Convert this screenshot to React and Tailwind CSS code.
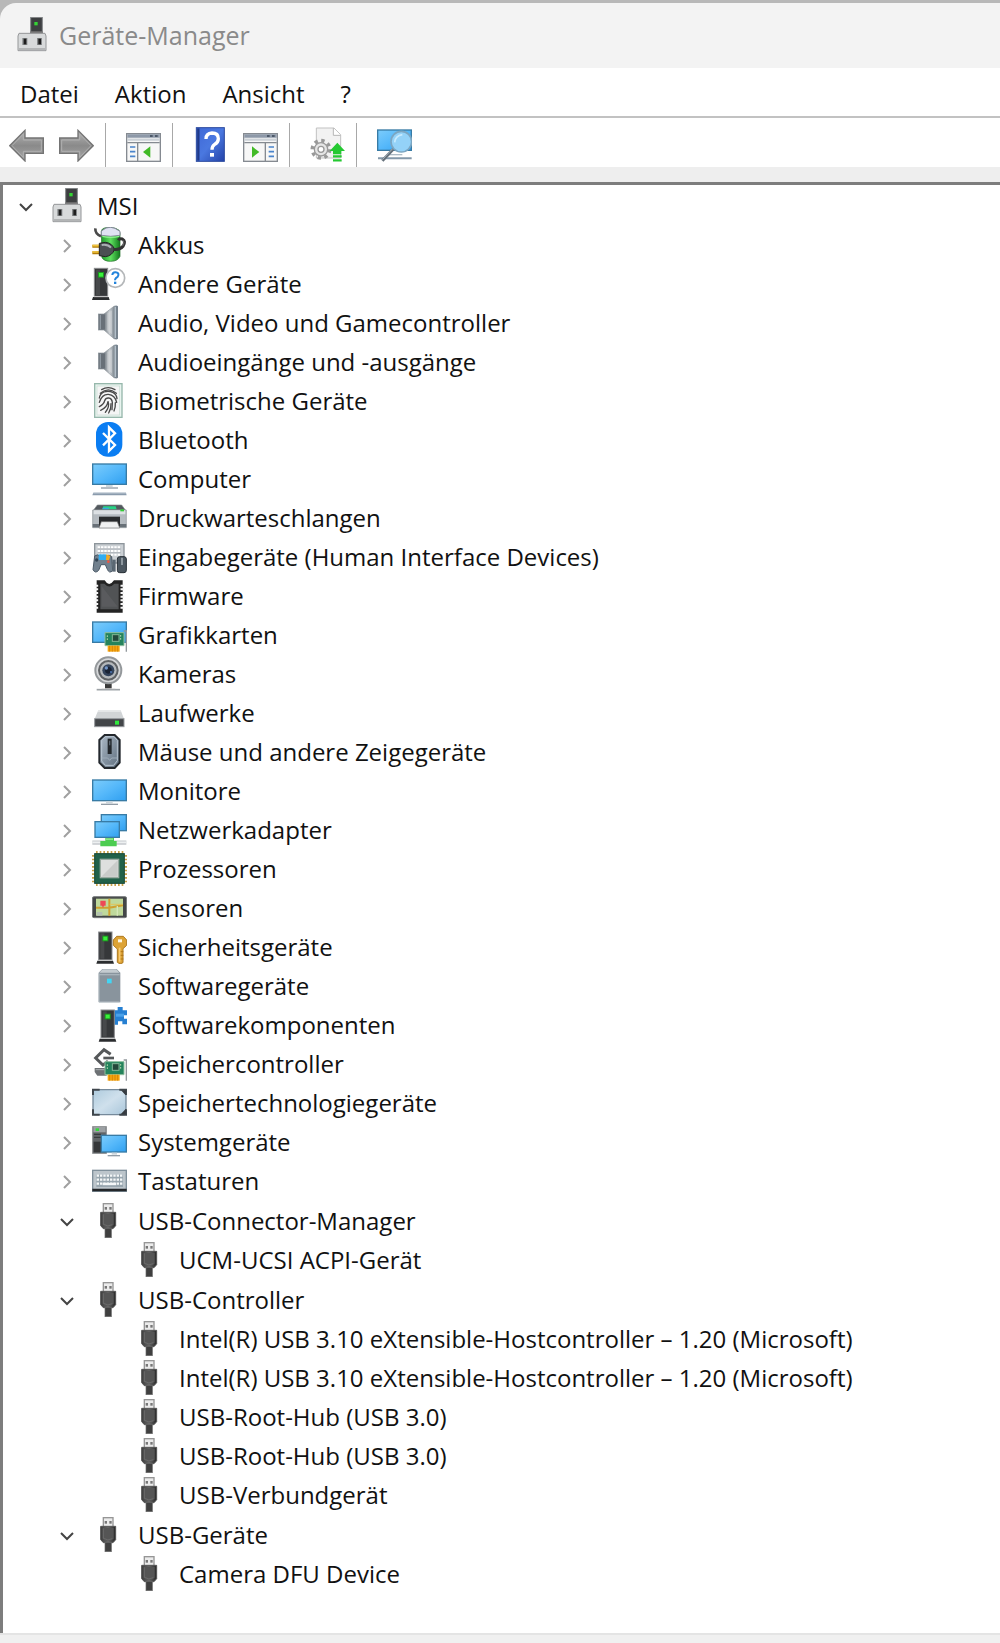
import React, { useState } from "react";

function Icon({ children, className = "" }) {
  return (
    <svg
      viewBox="0 0 105 105"
      className={"block size-[35px] shrink-0 " + className}
      aria-hidden="true"
    >
      {children}
    </svg>
  );
}

function Gradients() {
  return (
    <svg className="absolute size-0" aria-hidden="true">
      <defs>
        <linearGradient id="screen" x1="0" y1="0" x2="1" y2="1">
          <stop offset="0" stopColor="#7cccfb" />
          <stop offset="0.5" stopColor="#55b8fa" />
          <stop offset="1" stopColor="#2f9ff0" />
        </linearGradient>
        <linearGradient id="steel" x1="0" y1="0" x2="1" y2="0">
          <stop offset="0" stopColor="#777f86" />
          <stop offset="0.55" stopColor="#c9ced2" />
          <stop offset="1" stopColor="#7c868f" />
        </linearGradient>
        <linearGradient id="arrow" x1="0" y1="0" x2="0" y2="1">
          <stop offset="0" stopColor="#b4b4b4" />
          <stop offset="0.5" stopColor="#8a8a8a" />
          <stop offset="1" stopColor="#a8a8a8" />
        </linearGradient>
        <linearGradient id="help" x1="0" y1="0" x2="1" y2="1">
          <stop offset="0" stopColor="#3f68d6" />
          <stop offset="0.5" stopColor="#4a78e0" />
          <stop offset="1" stopColor="#2342a8" />
        </linearGradient>
        <linearGradient id="plug" x1="0" y1="0" x2="1" y2="0">
          <stop offset="0" stopColor="#3c3c3c" />
          <stop offset="0.5" stopColor="#686868" />
          <stop offset="1" stopColor="#262626" />
        </linearGradient>
        <linearGradient id="battery" x1="0" y1="0" x2="1" y2="0">
          <stop offset="0" stopColor="#1f9a2c" />
          <stop offset="0.5" stopColor="#5fe05f" />
          <stop offset="1" stopColor="#127a1d" />
        </linearGradient>
        <linearGradient id="mouse" x1="0" y1="0" x2="1" y2="1">
          <stop offset="0" stopColor="#aebbc8" />
          <stop offset="1" stopColor="#5d6d7d" />
        </linearGradient>
        <linearGradient id="pale" x1="0" y1="0" x2="1" y2="1">
          <stop offset="0" stopColor="#aecbdd" />
          <stop offset="0.5" stopColor="#cfe0ec" />
          <stop offset="1" stopColor="#a9c6da" />
        </linearGradient>
      </defs>
    </svg>
  );
}

function DeviceManagerIcon() {
  return (
    <Icon>
      <rect x="44" y="1" width="35" height="50" fill="#3d3f41" stroke="#85888a" strokeWidth="3" />
      <rect x="55" y="15" width="10" height="10" fill="#35d435" />
      <path d="M44 43h35l3 8H41z" fill="#777" />
      <path d="M9 49h78l3 8v44H6V57z" fill="#d8dadb" stroke="#949698" strokeWidth="3" />
      <path d="M8 93h80v7H8z" fill="#b3b5b6" />
      <rect x="19" y="63" width="15" height="21" fill="#85888a" />
      <rect x="23" y="65" width="8" height="17" fill="#1e1e1e" />
      <rect x="63" y="63" width="15" height="21" fill="#85888a" />
      <rect x="67" y="65" width="8" height="17" fill="#1e1e1e" />
    </Icon>
  );
}

function BatteryIcon() {
  return (
    <Icon>
      <path d="M28 14q0-10 14-12 14-4 28 2 14 4 14 14v70q-6 15-28 15-20 0-26-11z" fill="url(#battery)" stroke="#19691f" strokeWidth="2" />
      <path d="M28 25V12l14-9q13-5 27 1l15 9v12q-28 6-56 0z" fill="#dfe2f2" stroke="#85879a" strokeWidth="3" />
      <path d="M31 28q26 6 51 0" fill="none" stroke="#8df28d" strokeWidth="4" />
      <path d="M10 4q-1 16 17 24" fill="none" stroke="#4a4a4a" strokeWidth="8" />
      <path d="M1 58h25M1 77h25" stroke="#b17c08" strokeWidth="9" />
      <path d="M1 56h25M1 75h25" stroke="#f3c63e" strokeWidth="5" />
      <path d="M22 49l18-3q20 2 28 21-8 20-28 22l-18-3z" fill="#4b4f53" stroke="#222" strokeWidth="3" />
      <path d="M29 54q18-3 28 8" fill="none" stroke="#a9aeb3" strokeWidth="6" />
      <path d="M64 67q19 3 29-9 10-15-2-22-8-3-12 4" fill="none" stroke="#333" strokeWidth="9" />
      <path d="M92 57q7-10 1-17" fill="none" stroke="#888" strokeWidth="2" />
    </Icon>
  );
}

function Tower({ x = 0, y = 0 }) {
  return (
    <g transform={`translate(${x} ${y})`}>
      <rect x="7" y="4" width="40" height="84" fill="#36383a" stroke="#8b8d8f" strokeWidth="3" />
      <path d="M12 8h12v76H12z" fill="#47494b" />
      <rect x="18" y="15" width="18" height="17" fill="#1b9a20" />
      <rect x="21" y="18" width="12" height="11" fill="#3bf03b" />
      <path d="M3 90h47l3 9H0z" fill="#2b2d2f" />
      <path d="M6 89h42" stroke="#c9c9c9" strokeWidth="3" />
    </g>
  );
}

function OtherDeviceIcon() {
  return (
    <Icon>
      <Tower x={0} y={3} />
      <circle cx="70" cy="36" r="28" fill="#fff" stroke="#b4b7b9" strokeWidth="5" />
      <path d="M61 27q1-9 10-8 10 1 8 9-1 5-7 8-3 3-3 7" fill="none" stroke="#2384dc" strokeWidth="6" />
      <rect x="66" y="47" width="7" height="7" fill="#2384dc" />
    </Icon>
  );
}

function SpeakerIcon() {
  return (
    <Icon>
      <path d="M36 27L67 3v99L36 75z" fill="url(#steel)" stroke="#8e969c" strokeWidth="2" />
      <rect x="19" y="27" width="21" height="48" fill="#687078" stroke="#8d959b" strokeWidth="2" />
      <path d="M25 30v43" stroke="#8e98a1" strokeWidth="4" />
      <path d="M67 3q6-4 11 1v97q-4 4-11 1z" fill="#77838e" />
      <path d="M70 5v94" stroke="#b3bfc9" strokeWidth="4" />
      <path d="M46 25l14-9v72L46 77z" fill="#d9dcde" opacity="0.5" />
    </Icon>
  );
}

function FingerprintIcon() {
  return (
    <Icon>
      <rect x="8" y="2" width="82" height="101" fill="#e9f4ef" stroke="#97b8ac" strokeWidth="4" />
      <rect x="15" y="9" width="68" height="87" fill="#f5f5f5" stroke="#c8dbd3" strokeWidth="2" />
      <g fill="none" stroke="#484848" strokeWidth="4" strokeLinecap="round">
        <path d="M29 20q19-12 40 0" />
        <path d="M25 31q24-21 48 0" />
        <path d="M22 45q2-13 14-18 13-5 26 1 12 6 13 19" />
        <path d="M22 58q8-25 27-24 20 2 25 24" />
        <path d="M22 71q14-7 16-18 3-9 12-8 10 1 11 14l-1 21" />
        <path d="M26 82q20-9 22-27 6 16-8 33" />
        <path d="M57 62q1 15-7 28M70 59q1 14-4 25" />
      </g>
    </Icon>
  );
}

function BluetoothIcon() {
  return (
    <Icon>
      <rect x="12" y="0" width="79" height="104" rx="36" fill="#0a7df2" />
      <path d="M33 33l36 36-18 18V16l18 18-36 36" fill="none" stroke="#fff" strokeWidth="7" />
    </Icon>
  );
}

function ComputerIcon() {
  return (
    <Icon>
      <rect x="2" y="9" width="101" height="61" fill="url(#screen)" stroke="#387ba5" strokeWidth="4" />
      <path d="M42 72h20v6H42z" fill="#cdd6dc" />
      <path d="M27 81h51" stroke="#929da7" strokeWidth="4" />
      <path d="M4 95h98l2 8H1z" fill="#8a9bad" />
      <path d="M4 96h98" stroke="#bdc9d4" strokeWidth="3" />
    </Icon>
  );
}

function PrinterIcon() {
  return (
    <Icon>
      <path d="M16 15h73l11 15H5z" fill="#53595e" stroke="#83898d" strokeWidth="2" />
      <path d="M34 19h37l3 9H31z" fill="#27d486" />
      <path d="M32 23h18v5H31z" fill="#3aa7df" />
      <path d="M2 30h101v53H2z" fill="#b5bbc0" stroke="#8b9196" strokeWidth="2" />
      <path d="M5 31h95v12H5z" fill="#dce0e3" />
      <rect x="85" y="28" width="11" height="6" fill="#33cc36" />
      <path d="M2 72h101v10H2z" fill="#687077" />
      <path d="M21 50h63v29H21z" fill="#292b2d" />
      <path d="M28 65h48l7 19H21z" fill="#f1f2f2" stroke="#777" strokeWidth="2" />
    </Icon>
  );
}

function HidIcon() {
  return (
    <Icon>
      <rect x="8" y="14" width="88" height="58" fill="#cbd0d4" stroke="#8d959b" strokeWidth="4" />
      <path d="M17 25h70M17 36h70M17 47h70" stroke="#fff" strokeWidth="6" strokeDasharray="7 3" />
      <path d="M17 30h70M17 41h70" stroke="#a0a7ac" strokeWidth="2" />
      <path d="M8 51q9-7 17 0h17q10-7 17 2l3 42q-10 10-16-4l-6-14H27l-7 17q-10 11-17-2z" fill="#72818e" stroke="#4b5966" strokeWidth="3" />
      <path d="M20 46h23v17H20z" fill="#31adf1" />
      <path d="M43 46l12 5-4 12h-9z" fill="#f1aa25" />
      <circle cx="14" cy="63" r="5" fill="#344453" />
      <circle cx="49" cy="68" r="4" fill="#ee5742" />
      <path d="M66 62v36" stroke="#5a6772" strokeWidth="10" />
      <rect x="76" y="53" width="27" height="48" rx="7" fill="#4c5760" stroke="#252d34" strokeWidth="3" />
      <path d="M90 56v22" stroke="#b2bbc1" strokeWidth="4" />
    </Icon>
  );
}

function FirmwareIcon() {
  return (
    <Icon>
      <path d="M14 7h24q13 22 28 0h26v97H14z" fill="#232323" />
      <path d="M25 17h12q15 17 30 0h13v77H25z" fill="#515355" />
      <path d="M13 20v72M91 20v72" stroke="#f5f5f5" strokeWidth="11" strokeDasharray="6 5" />
      <path d="M29 86h48L29 25z" fill="#68696b" opacity="0.4" />
    </Icon>
  );
}

function Card() {
  return (
    <g>
      <path d="M39 47h57v39H39z" fill="#24835c" stroke="#8fbf9e" strokeWidth="3" />
      <rect x="61" y="53" width="20" height="20" fill="#23483a" stroke="#81b796" strokeWidth="3" />
      <path d="M46 55v16M86 54v18" stroke="#b7d7af" strokeWidth="3" strokeDasharray="5 4" />
      <path d="M47 86h36v18H47z" fill="#f5a60e" />
      <path d="M53 86v18M61 86v18M69 86v18M77 86v18" stroke="#cb7204" strokeWidth="2" />
      <path d="M95 42h8v62" fill="none" stroke="#93999d" strokeWidth="4" />
    </g>
  );
}

function GraphicsIcon() {
  return (
    <Icon>
      <rect x="2" y="15" width="101" height="61" fill="url(#screen)" stroke="#387ba5" strokeWidth="4" />
      <Card />
    </Icon>
  );
}

function CameraIcon() {
  return (
    <Icon>
      <path d="M39 78h20v20H39z" fill="#3a3a3a" />
      <path d="M14 101h70" stroke="#9da2a6" strokeWidth="5" />
      <path d="M29 98h41" stroke="#dadada" strokeWidth="2" />
      <circle cx="49" cy="43" r="39" fill="#d6d8da" stroke="#94989b" strokeWidth="6" />
      <circle cx="49" cy="43" r="28" fill="#b4b8bb" stroke="#606366" strokeWidth="6" />
      <circle cx="49" cy="43" r="18" fill="#34445c" />
      <circle cx="49" cy="43" r="10" fill="#1a2334" />
      <circle cx="43" cy="36" r="5" fill="#7396c8" />
      <circle cx="57" cy="48" r="3" fill="#4f79b7" />
    </Icon>
  );
}

function DriveIcon() {
  return (
    <Icon>
      <path d="M19 46h67l10 25H8z" fill="#d1d4d6" />
      <path d="M18 48h68" stroke="#e9eaeb" strokeWidth="5" />
      <rect x="8" y="71" width="88" height="24" fill="#424548" stroke="#95999c" strokeWidth="3" />
      <rect x="69" y="77" width="12" height="12" fill="#2fe83d" />
    </Icon>
  );
}

function MouseIcon() {
  return (
    <Icon>
      <path d="M38 3h30l15 15v68l-15 16H38L22 86V18z" fill="url(#mouse)" stroke="#23282d" strokeWidth="6" />
      <path d="M40 8h26l10 11v61L65 94H40L29 81V19z" fill="none" stroke="#b8c5d1" strokeWidth="3" />
      <path d="M29 72h18l6 7 6-7h17" fill="none" stroke="#9eacb9" strokeWidth="3" />
      <rect x="47" y="14" width="12" height="46" fill="#22272c" />
      <path d="M53 20v14" stroke="#59636d" strokeWidth="4" />
    </Icon>
  );
}

function MonitorIcon() {
  return (
    <Icon>
      <rect x="2" y="21" width="101" height="62" fill="url(#screen)" stroke="#387ba5" strokeWidth="4" />
      <path d="M42 85h20v6H42z" fill="#cdd6dc" />
      <path d="M27 94h51" stroke="#929da7" strokeWidth="4" />
    </Icon>
  );
}

function NetworkIcon() {
  return (
    <Icon>
      <rect x="28" y="8" width="75" height="48" fill="url(#screen)" stroke="#387ba5" strokeWidth="4" />
      <rect x="9" y="29" width="73" height="47" fill="url(#screen)" stroke="#387ba5" strokeWidth="4" />
      <path d="M1 92h102" stroke="#c4c9cc" strokeWidth="13" />
      <path d="M1 91h102" stroke="#edf0f1" strokeWidth="5" />
      <path d="M40 78h26v9h8v16H25V87h15z" fill="#4ccc51" />
      <path d="M41 79h22v5H41z" fill="#8de48d" />
    </Icon>
  );
}

function ProcessorIcon() {
  return (
    <Icon>
      <path d="M12 4h84M12 101h84" stroke="#c8a149" strokeWidth="8" strokeDasharray="5 6" />
      <path d="M4 12v84M101 12v84" stroke="#c8a149" strokeWidth="8" strokeDasharray="5 6" />
      <rect x="8" y="8" width="89" height="89" fill="#216149" stroke="#154634" strokeWidth="3" />
      <rect x="25" y="25" width="55" height="55" fill="#dedfde" stroke="#99aaa0" strokeWidth="4" />
      <path d="M28 77l49-49v49z" fill="#c9cbc9" />
    </Icon>
  );
}

function SensorIcon() {
  return (
    <Icon>
      <rect x="1" y="20" width="103" height="63" rx="5" fill="#434647" stroke="#777b7c" strokeWidth="3" />
      <rect x="12" y="26" width="81" height="51" fill="#bfd99c" />
      <path d="M52 26v51M12 53h40l41-7" fill="none" stroke="#d0a12f" strokeWidth="6" />
      <path d="M53 43h40" stroke="#e1c459" strokeWidth="3" />
      <path d="M76 48v29" stroke="#d5e7b8" strokeWidth="4" />
      <path d="M25 32h16v15h-5l-3 7-3-7h-5z" fill="#ee4856" />
      <path d="M14 66h17v11H14z" fill="#b4c3b1" />
    </Icon>
  );
}

function SecurityIcon() {
  return (
    <Icon>
      <Tower x={13} y={5} />
      <path d="M74 22h20l10 11v16L93 59v42l-9 4-8-5V60L64 49V33z" fill="#dda335" stroke="#ae7920" strokeWidth="3" />
      <path d="M78 31h12v9H78z" fill="#fff7e3" />
      <path d="M83 56v42" stroke="#f7cb74" strokeWidth="5" />
      <path d="M94 68h-8m8 11h-8m8 11h-8" stroke="#af7418" strokeWidth="3" />
    </Icon>
  );
}

function SoftwareIcon() {
  return (
    <Icon>
      <path d="M20 14L31 3h43l11 11v89H20z" fill="#89949d" />
      <path d="M22 14L32 4h41l9 10z" fill="#c4cbd0" />
      <path d="M22 20h61" stroke="#a8b3bb" strokeWidth="4" />
      <path d="M21 16v86h62" fill="none" stroke="#b4bdc4" strokeWidth="3" />
      <rect x="45" y="32" width="14" height="14" fill="#42d5f4" />
    </Icon>
  );
}

function ComponentIcon() {
  return (
    <Icon>
      <path d="M66 10h11V0h15v10h13v15h-9v10h9v17H91V43H78v10H66z" fill="#2780d2" />
      <path d="M72 20h24v9H72z" fill="#4ba2ea" />
      <Tower x={20} y={5} />
    </Icon>
  );
}

function StorageControllerIcon() {
  return (
    <Icon>
      <path d="M56 25L36 11 11 36l22 21 15-11" fill="none" stroke="#55585a" strokeWidth="9" />
      <path d="M34 36h32" stroke="#55585a" strokeWidth="8" />
      <path d="M8 66h36v23H16L8 78z" fill="#6d7174" />
      <path d="M11 71h26" stroke="#a9adb0" strokeWidth="3" />
      <Card />
    </Icon>
  );
}

function StorageIcon() {
  return (
    <Icon>
      <rect x="3" y="14" width="99" height="75" rx="5" fill="url(#pale)" stroke="#75899a" strokeWidth="4" />
      <path d="M3 30V14h20M82 14h20v16M102 73v16H82M23 89H3V73" fill="none" stroke="#3f464c" strokeWidth="6" />
      <path d="M87 16h14v15zM101 72v16H86z" fill="#353a3f" />
    </Icon>
  );
}

function SystemIcon() {
  return (
    <Icon>
      <rect x="2" y="8" width="41" height="80" fill="#606467" stroke="#8b8e90" strokeWidth="3" />
      <path d="M4 9h37v16H4z" fill="#9ca0a3" />
      <rect x="11" y="13" width="10" height="8" fill="#33d83a" />
      <path d="M6 31h21M6 40h21" stroke="#303336" strokeWidth="3" />
      <path d="M5 53h22v32H5z" fill="#353739" />
      <rect x="28" y="34" width="75" height="50" fill="url(#screen)" stroke="#387ba5" strokeWidth="4" />
      <path d="M59 86h16v6H59z" fill="#cdd6dc" />
      <path d="M47 95h37" stroke="#929da7" strokeWidth="4" />
    </Icon>
  );
}

function KeyboardIcon() {
  return (
    <Icon>
      <rect x="2" y="22" width="101" height="63" fill="#bcc5cb" stroke="#80909b" strokeWidth="4" />
      <path d="M13 35h80v37H13z" fill="#98a6af" />
      <path d="M14 38h78M14 50h78M14 62h78" stroke="#f4f7f8" strokeWidth="7" strokeDasharray="7 3" />
      <path d="M32 63h40" stroke="#f4f7f8" strokeWidth="7" />
      <path d="M1 77h103v8H1z" fill="#23272a" />
    </Icon>
  );
}

function UsbIcon() {
  return (
    <Icon>
      <rect x="34" y="2" width="29" height="30" fill="#ebebeb" stroke="#969696" strokeWidth="4" />
      <rect x="38" y="12" width="7" height="8" fill="#777" />
      <rect x="52" y="12" width="7" height="8" fill="#777" />
      <path d="M26 28h45v40l-8 9H34l-8-9z" fill="url(#plug)" stroke="#555" strokeWidth="3" />
      <path d="M32 32h33v33q-16 12-33 0z" fill="#555" />
      <path d="M34 34v30q14 9 27 1" fill="none" stroke="#757575" strokeWidth="2" />
      <rect x="39" y="76" width="19" height="28" fill="#3f3f3f" stroke="#686868" strokeWidth="2" />
    </Icon>
  );
}

function ArrowIcon({ flip }) {
  return (
    <Icon className={flip ? "-scale-x-100" : ""}>
      <path d="M2 56L48 10v23h55v46H48v23z" fill="url(#arrow)" stroke="#747474" strokeWidth="4" />
      <path d="M9 56l34-35v18h54v34H43v18z" fill="none" stroke="#b0b0b0" strokeWidth="3" />
    </Icon>
  );
}

function PanelIcon({ right }) {
  return (
    <Icon>
      <rect x="2" y="20" width="101" height="83" fill="#f7f7f7" stroke="#858a91" strokeWidth="4" />
      <path d="M4 22h97v10H4z" fill="#8d98a8" />
      <path d="M72 27h8m7 0h8" stroke="#394454" strokeWidth="5" />
      <path d="M4 38h97" stroke="#cbd1d7" strokeWidth="7" />
      <path d="M4 47h97" stroke="#858a91" strokeWidth="4" />
      {right ? (
        <>
          <path d="M67 48v54" stroke="#858a91" strokeWidth="4" />
          <path d="M77 60h16M77 74h16M77 88h16" stroke="#4a84cc" strokeWidth="5" />
          <path d="M27 58l22 17-22 17z" fill="#42ba27" />
        </>
      ) : (
        <>
          <path d="M35 48v54" stroke="#858a91" strokeWidth="4" />
          <path d="M12 60h16M12 74h16M12 88h16" stroke="#4a84cc" strokeWidth="5" />
          <path d="M73 58L51 75l22 17z" fill="#42ba27" />
        </>
      )}
    </Icon>
  );
}

function HelpIcon() {
  return (
    <Icon>
      <rect x="10" y="2" width="84" height="101" fill="url(#help)" stroke="#2b499f" strokeWidth="3" />
      <path d="M16 4v97" stroke="#203a8a" strokeWidth="7" />
      <path d="M39 36q0-17 18-18 19 0 19 17 0 11-12 18-7 5-7 15" fill="none" stroke="#fff" strokeWidth="10" />
      <rect x="51" y="78" width="12" height="11" fill="#fff" />
    </Icon>
  );
}

function UpdateIcon() {
  return (
    <Icon>
      <path d="M19 3h53l20 20v70H19z" fill="#f2f2f2" stroke="#c1c1c1" strokeWidth="3" />
      <path d="M70 3v22h22" fill="#fff" stroke="#b5b5b5" strokeWidth="3" />
      <circle cx="33" cy="67" r="26" fill="none" stroke="#999" strokeWidth="11" strokeDasharray="10 10.4" />
      <circle cx="33" cy="67" r="20" fill="#e5e5e5" stroke="#999" strokeWidth="4" />
      <circle cx="33" cy="67" r="9" fill="#fff" stroke="#999" strokeWidth="4" />
      <path d="M82 47l23 25H94v10H69V72H59z" fill="#25c932" />
      <path d="M69 88h26M69 100h26" stroke="#25c932" strokeWidth="7" />
    </Icon>
  );
}

function ScanIcon() {
  return (
    <Icon>
      <rect x="2" y="9" width="101" height="61" fill="url(#screen)" stroke="#387ba5" strokeWidth="4" />
      <path d="M3 94h101" stroke="#8398aa" strokeWidth="6" />
      <path d="M36 83h40" stroke="#adbbc6" strokeWidth="4" />
      <path d="M50 65l-34 36" stroke="#65717b" strokeWidth="9" />
      <path d="M47 65L16 98" stroke="#a9b4bc" strokeWidth="3" />
      <circle cx="73" cy="44" r="31" fill="#94d2f8" stroke="#7ba6c2" strokeWidth="5" />
      <path d="M53 46q2-20 23-23" fill="none" stroke="#c8ebff" strokeWidth="5" />
    </Icon>
  );
}

const usb = (label) => ({ label, icon: UsbIcon });

const categories = [
  { label: "Akkus", icon: BatteryIcon },
  { label: "Andere Geräte", icon: OtherDeviceIcon },
  { label: "Audio, Video und Gamecontroller", icon: SpeakerIcon },
  { label: "Audioeingänge und -ausgänge", icon: SpeakerIcon },
  { label: "Biometrische Geräte", icon: FingerprintIcon },
  { label: "Bluetooth", icon: BluetoothIcon },
  { label: "Computer", icon: ComputerIcon },
  { label: "Druckwarteschlangen", icon: PrinterIcon },
  { label: "Eingabegeräte (Human Interface Devices)", icon: HidIcon },
  { label: "Firmware", icon: FirmwareIcon },
  { label: "Grafikkarten", icon: GraphicsIcon },
  { label: "Kameras", icon: CameraIcon },
  { label: "Laufwerke", icon: DriveIcon },
  { label: "Mäuse und andere Zeigegeräte", icon: MouseIcon },
  { label: "Monitore", icon: MonitorIcon },
  { label: "Netzwerkadapter", icon: NetworkIcon },
  { label: "Prozessoren", icon: ProcessorIcon },
  { label: "Sensoren", icon: SensorIcon },
  { label: "Sicherheitsgeräte", icon: SecurityIcon },
  { label: "Softwaregeräte", icon: SoftwareIcon },
  { label: "Softwarekomponenten", icon: ComponentIcon },
  { label: "Speichercontroller", icon: StorageControllerIcon },
  { label: "Speichertechnologiegeräte", icon: StorageIcon },
  { label: "Systemgeräte", icon: SystemIcon },
  { label: "Tastaturen", icon: KeyboardIcon },
  { ...usb("USB-Connector-Manager"), children: [usb("UCM-UCSI ACPI-Gerät")] },
  {
    ...usb("USB-Controller"),
    children: [
      usb("Intel(R) USB 3.10 eXtensible-Hostcontroller – 1.20 (Microsoft)"),
      usb("Intel(R) USB 3.10 eXtensible-Hostcontroller – 1.20 (Microsoft)"),
      usb("USB-Root-Hub (USB 3.0)"),
      usb("USB-Root-Hub (USB 3.0)"),
      usb("USB-Verbundgerät"),
    ],
  },
  { ...usb("USB-Geräte"), children: [usb("Camera DFU Device")] },
];

function Chevron({ open }) {
  return (
    <svg viewBox="0 0 18 18" className="size-[18px]" fill="none" aria-hidden="true">
      {open ? (
        <path d="M3 6l6 6 6-6" stroke="#444" strokeWidth="2" />
      ) : (
        <path d="M6 3l6 6-6 6" stroke="#a0a0a0" strokeWidth="2" />
      )}
    </svg>
  );
}

function TreeNode({ node, leaf }) {
  const [open, setOpen] = useState(Boolean(node.children));
  const NodeIcon = node.icon;
  return (
    <li
      role="treeitem"
      aria-expanded={leaf ? undefined : open}
      className={node.children ? "pt-px" : ""}
    >
      <div className="flex h-[39px] items-center">
        {leaf ? (
          <span className="w-[34px] shrink-0" />
        ) : (
          <button
            type="button"
            aria-label={node.label + (open ? " reduzieren" : " erweitern")}
            onClick={() => setOpen(!open)}
            className="flex h-full w-[34px] shrink-0 items-center pt-0.5"
          >
            <Chevron open={open} />
          </button>
        )}
        <NodeIcon />
        <span className="ml-[11px] whitespace-nowrap">{node.label}</span>
      </div>
      {open && node.children && (
        <ul role="group" className="pl-[41px]">
          {node.children.map((child, i) => (
            <TreeNode key={i} node={child} leaf={node.icon === UsbIcon} />
          ))}
        </ul>
      )}
    </li>
  );
}

function ToolButton({ label, children }) {
  return (
    <button type="button" aria-label={label} title={label}>
      {children}
    </button>
  );
}

export default function App() {
  return (
    <div className="flex min-h-screen flex-col bg-[#b8b8b8] pt-[3px] font-['Open_Sans','Noto_Sans',sans-serif] text-[24px] leading-8 text-[#111]">
      <Gradients />
      <header className="flex h-[65px] items-center gap-2 rounded-tl-2xl bg-[#f3f3f3] pb-0.5 pl-4 text-[25px] text-[#8a8a8a]">
        <DeviceManagerIcon />
        <h1>Geräte-Manager</h1>
      </header>
      <nav className="flex h-[50px] items-center gap-9 border-b-2 border-[#c2c2c2] bg-white pt-1 pl-5">
        <button type="button">Datei</button>
        <button type="button">Aktion</button>
        <button type="button">Ansicht</button>
        <button type="button">?</button>
      </nav>
      <div role="toolbar" className="flex h-[49px] items-end bg-white">
        <div className="flex h-11 items-start gap-[15px] border-r border-[#a8a8a8] pt-1 pr-[11px] pl-[9px]">
          <ToolButton label="Zurück"><ArrowIcon /></ToolButton>
          <ToolButton label="Vorwärts"><ArrowIcon flip /></ToolButton>
        </div>
        <div className="flex h-11 items-start border-r border-[#a8a8a8] pt-1 pr-[11px] pl-5">
          <ToolButton label="Konsolenstruktur"><PanelIcon /></ToolButton>
        </div>
        <div className="flex h-11 items-start gap-[15px] border-r border-[#a8a8a8] pt-1 pr-[11px] pl-5">
          <ToolButton label="Hilfe"><HelpIcon /></ToolButton>
          <ToolButton label="Aktionsbereich"><PanelIcon right /></ToolButton>
        </div>
        <div className="flex h-11 items-start border-r border-[#a8a8a8] pt-1 pr-[11px] pl-5">
          <ToolButton label="Treiber aktualisieren"><UpdateIcon /></ToolButton>
        </div>
        <div className="flex h-11 items-start pt-1 pl-5">
          <ToolButton label="Nach geänderter Hardware suchen"><ScanIcon /></ToolButton>
        </div>
      </div>
      <div className="h-[15px] bg-[#eeeeee]" />
      <main className="grow overflow-hidden border-t-3 border-l-3 border-[#7d7d7d] bg-white pb-9 pl-[14px]">
        <ul role="tree" aria-label="Geräte">
          <TreeNode node={{ label: "MSI", icon: DeviceManagerIcon, children: categories }} />
        </ul>
      </main>
      <footer className="h-[10px] border-t-2 border-[#e4e4e4] bg-[#f0f0f0]" />
    </div>
  );
}
